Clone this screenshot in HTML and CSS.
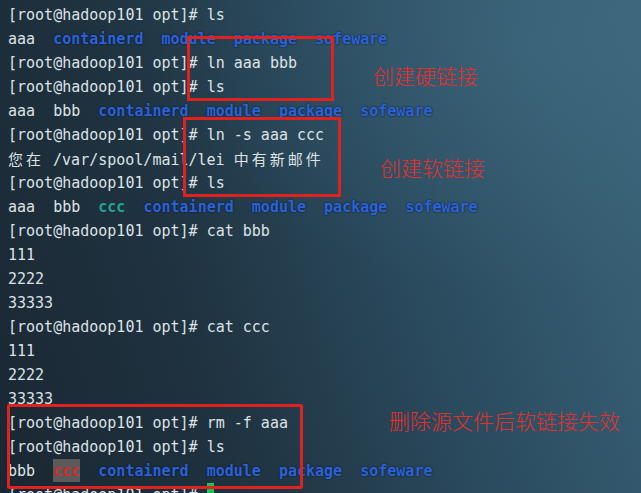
FILE: index.html
```html
<!DOCTYPE html>
<html lang="zh-CN">
<head>
<meta charset="utf-8">
<title>hadoop101 terminal</title>
<link rel="stylesheet" href="styles.css">
</head>
<body>
<div class="term">
  <div class="lines">
    <div class="ln">[root@hadoop101 opt]# ls</div>
    <div class="ln">aaa  <b class="dir">containerd</b>  <b class="dir">module</b>  <b class="dir">package</b>  <b class="dir">sofeware</b></div>
    <div class="ln">[root@hadoop101 opt]# ln aaa bbb</div>
    <div class="ln">[root@hadoop101 opt]# ls</div>
    <div class="ln">aaa  bbb  <b class="dir">containerd</b>  <b class="dir">module</b>  <b class="dir">package</b>  <b class="dir">sofeware</b></div>
    <div class="ln">[root@hadoop101 opt]# ln -s aaa ccc</div>
    <div class="ln"><span class="cjk">您在</span> /var/spool/mail/lei <span class="cjk">中有新邮件</span></div>
    <div class="ln">[root@hadoop101 opt]# ls</div>
    <div class="ln">aaa  bbb  <b class="link">ccc</b>  <b class="dir">containerd</b>  <b class="dir">module</b>  <b class="dir">package</b>  <b class="dir">sofeware</b></div>
    <div class="ln">[root@hadoop101 opt]# cat bbb</div>
    <div class="ln">111</div>
    <div class="ln">2222</div>
    <div class="ln">33333</div>
    <div class="ln">[root@hadoop101 opt]# cat ccc</div>
    <div class="ln">111</div>
    <div class="ln">2222</div>
    <div class="ln">33333</div>
    <div class="ln">[root@hadoop101 opt]# rm -f aaa</div>
    <div class="ln">[root@hadoop101 opt]# ls</div>
    <div class="ln">bbb  <b class="broken">ccc</b>  <b class="dir">containerd</b>  <b class="dir">module</b>  <b class="dir">package</b>  <b class="dir">sofeware</b></div>
    <div class="ln">[root@hadoop101 opt]# <span class="cursor"></span></div>
  </div>

  <div class="box box-hard"></div>
  <div class="box box-soft"></div>
  <div class="box box-rm"></div>

  <div class="note note-hard">创建硬链接</div>
  <div class="note note-soft">创建软链接</div>
  <div class="note note-rm">删除源文件后软链接失效</div>
</div>
</body>
</html>
```
FILE: styles.css
```css
html, body {
  margin: 0;
  padding: 0;
}

body {
  width: 641px;
  height: 493px;
  overflow: hidden;
}

.term {
  position: relative;
  width: 641px;
  height: 493px;
  overflow: hidden;
  background:
    radial-gradient(ellipse 60% 50% at 85% 10%, rgba(70, 115, 138, 0.35), rgba(70, 115, 138, 0) 100%),
    linear-gradient(72deg, #1a2732 0%, #1f3240 30%, #2a4a5d 60%, #355c71 85%, #3a6479 100%);
  color: #dde2e5;
  font-family: "DejaVu Sans Mono", "Noto Sans CJK SC", monospace;
  font-size: 15px;
}

.lines {
  padding: 3px 0 0 8px;
}

.ln {
  height: 24px;
  line-height: 24px;
  white-space: pre;
}

.cjk {
  font-family: "Noto Sans CJK SC", sans-serif;
  letter-spacing: 3px;
}

.dir {
  color: #2d62d6;
  font-weight: bold;
  text-shadow: 0 0 2px rgba(5, 15, 40, 0.9);
}

.link {
  color: #1ea592;
  font-weight: bold;
}

.broken {
  display: inline-block;
  color: #d42a2a;
  font-weight: bold;
  background: #5b5959;
  height: 23px;
  vertical-align: top;
}

.cursor {
  display: inline-block;
  width: 7px;
  height: 24px;
  background: #1cc45a;
  vertical-align: top;
}

.box {
  position: absolute;
  border: 3px solid #e0221f;
  box-sizing: border-box;
}

.box-hard {
  left: 187px;
  top: 36px;
  width: 147px;
  height: 65px;
}

.box-soft {
  left: 183px;
  top: 117px;
  width: 158px;
  height: 80px;
}

.box-rm {
  left: 7px;
  top: 404px;
  width: 296px;
  height: 85px;
  border-radius: 2px;
}

.note {
  position: absolute;
  font-family: "Noto Sans CJK SC", sans-serif;
  font-weight: 300;
  font-size: 21px;
  line-height: 24px;
  color: #e2302e;
  white-space: nowrap;
}

.note-hard {
  left: 373px;
  top: 63px;
}

.note-soft {
  left: 380px;
  top: 155px;
}

.note-rm {
  left: 389px;
  top: 408px;
}
```
